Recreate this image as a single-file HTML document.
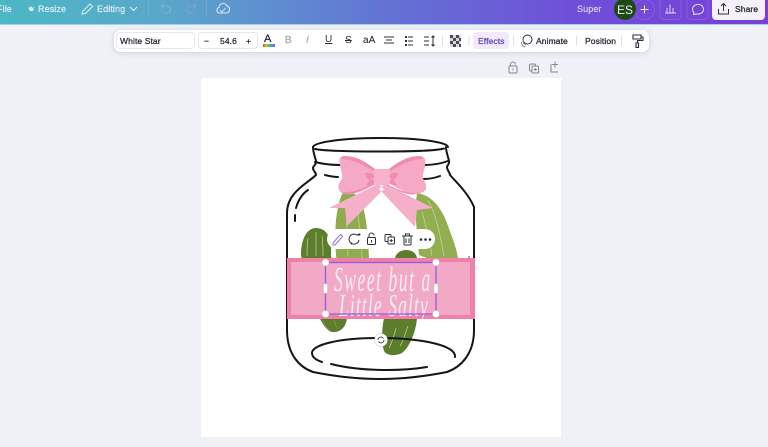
<!DOCTYPE html>
<html><head><meta charset="utf-8">
<style>
html,body{margin:0;padding:0;width:768px;height:447px;overflow:hidden;background:#eff1f7;font-family:"Liberation Sans",sans-serif}
.abs{position:absolute}
#hdr{position:absolute;left:0;top:0;width:768px;height:24px;background:linear-gradient(90deg,#4bb8c4 0%,#5aa6cb 22%,#6373d4 50%,#6f4fd8 75%,#7a3fd6 100%);border-bottom:1px solid #9fd0ea}
.t{position:absolute;color:#dcecf4;font-size:9px;-webkit-text-stroke:.2px #dcecf4;letter-spacing:.1px;white-space:nowrap;line-height:12px}
.d{position:absolute;color:#2c2f3a;font-size:8.5px;-webkit-text-stroke:.3px #2c2f3a;letter-spacing:.1px;white-space:nowrap;line-height:12px}
</style></head><body>
<div id="hdr"></div>
<div class="t" style="left:-3px;top:3px">File</div>
<div class="t" style="left:38px;top:3px">Resize</div>
<div class="t" style="left:97px;top:3px">Editing</div>
<div class="t" style="left:577px;top:3px;color:#d8cff6;-webkit-text-stroke:.2px #d8cff6">Super</div>
<svg class="abs" style="left:0;top:0" width="768" height="25" fill="none" stroke="#dcecf4" stroke-width="1">
<path d="M28 6.500l1.500 1.500 1.500-2 1.500 2 1.500-1.500-.8 4.500h-3.400z" fill="#dcecf4" stroke="none"/>
<path d="M82 14l1-3 7-7 2.500 2.500-7 7z" stroke-width="1.100"/>
<path d="M130 7l3.500 3.500 3.500-3.500" stroke-width="1.100"/>
<path d="M148.500 1v15M206.500 1v15" stroke="#8fb4d8" stroke-width=".7" opacity=".7"/>
<path d="M161 6h6a3.500 3.500 0 010 7h-4M161 6l2.500-2.500M161 6l2.500 2.500" stroke="#84acd2"/>
<path d="M196 6h-6a3.500 3.500 0 000 7h3M196 6l-2.500-2.500M196 6l-2.500 2.500" stroke="#8a9cd4"/>
<path d="M219.500 13a2.800 2.800 0 01-.5-5.500 4.200 4.200 0 018-1.500 3.600 3.600 0 01-.5 7z" stroke-width="1"/>
<path d="M220 10l2 2 3.500-4" stroke-width=".8"/>
<circle cx="644.500" cy="9.500" r="10" stroke="#8a68dc" stroke-width=".7"/>
<path d="M640.500 9.500h8M644.500 5.500v8" stroke="#eee" stroke-width="1"/>
<rect x="660" y="-2" width="21" height="21.500" rx="4" stroke="#8a68dc" stroke-width=".7"/>
<rect x="687" y="-2" width="21" height="21.500" rx="4" stroke="#8a68dc" stroke-width=".7"/>
<path d="M665 13h11M667 13V8M670 13V4.500M673 13V8" stroke="#e6e0f8" stroke-width=".9"/>
<path d="M697.500 14a5.500 4.800 0 10-3.500-1.500l-.5 2z" stroke="#e6e0f8" stroke-width="1"/>
</svg>
<div class="abs" style="left:614px;top:-2px;width:22px;height:22px;border-radius:50%;background:#1c4a11;color:#eef;font-size:12px;text-align:center;line-height:24px">ES</div>
<div class="abs" style="left:712px;top:-4px;width:53px;height:24px;border-radius:4px;background:#f4f1fb"></div>
<svg class="abs" style="left:717px;top:2px" width="14" height="14" fill="none" stroke="#30303a" stroke-width="1"><path d="M1.500 7v5h10V7M6.500 9V1.500M4 4l2.500-2.500L9 4"/></svg>
<div class="d" style="left:735px;top:3px">Share</div>

<div class="abs" style="left:114px;top:30px;width:535px;height:22px;background:#fff;border-radius:7px;box-shadow:0 1px 6px rgba(60,60,90,.18)"></div>
<div class="abs" style="left:116px;top:32px;width:79px;height:17px;border:1px solid #e6e7ec;border-radius:4px;box-sizing:border-box"></div>
<div class="abs" style="left:198px;top:32px;width:60px;height:17px;border:1px solid #e6e7ec;border-radius:4px;box-sizing:border-box"></div>
<div class="d" style="left:120px;top:35px">White Star</div>
<div class="d" style="left:204px;top:35px">−</div>
<div class="d" style="left:220px;top:35px">54.6</div>
<div class="d" style="left:246px;top:35px">+</div>
<div class="d" style="left:264px;top:33px;font-size:11px">A</div>
<div class="abs" style="left:263px;top:44px;width:12px;height:3px;background:linear-gradient(90deg,#e83a3a,#f0b429,#4fc94f,#3aa0e8,#a04fe8)"></div>
<div class="d" style="left:285px;top:35px;font-size:10px;color:#b0b2b8;-webkit-text-stroke:.5px #b0b2b8">B</div>
<div class="d" style="left:306px;top:35px;font-size:10px;color:#b0b2b8;-webkit-text-stroke:.3px #b0b2b8;font-style:italic">I</div>
<div class="d" style="left:325px;top:34px;font-size:10px;-webkit-text-stroke:0;text-decoration:underline">U</div>
<div class="d" style="left:345px;top:35px;font-size:10px;-webkit-text-stroke:0;text-decoration:line-through">S</div>
<div class="d" style="left:363px;top:35px;font-size:10px;-webkit-text-stroke:.1px #2c2f3a">aA</div>
<svg class="abs" style="left:380px;top:32px" width="270" height="18" fill="none" stroke="#2c2f3a" stroke-width="1">
<path d="M4 5h10M6 8h6M4 11h10"/>
<path d="M28 5h5M28 9h5M28 13h5"/>
<path d="M25 4h2v2h-2zM25 8h2v2h-2zM25 12h2v2h-2z" fill="#2c2f3a" stroke="none"/>
<path d="M44 5h5M44 9h5M44 13h5M53 4v10M51.500 5.500L53 4l1.500 1.500M51.500 12.500L53 14l1.500-1.500"/>
<path d="M62.500 4v10M89 4v10M133.500 4v10M196.500 4v10M241.500 4v10" stroke="#d8d9e0" stroke-width=".8"/>
<path d="M70 3h3v3h-3zM76 3h3v3h-3zM73 6h3v3h-3zM79 6h2v3h-2zM70 9h3v3h-3zM76 9h3v3h-3zM73 12h3v3h-3zM79 12h2v3h-2z" fill="#4a4a52" stroke="none"/>
<path d="M73 3h3v3h-3zM79 3h2v3h-2zM70 6h3v3h-3zM76 6h3v3h-3zM73 9h3v3h-3zM79 9h2v3h-2zM70 12h3v3h-3zM76 12h3v3h-3z" fill="#d8d9de" stroke="none"/>
<circle cx="147.500" cy="7.500" r="4.500"/><path d="M143 8a5 5 0 003 5M141.500 10a4.500 4.500 0 003.500 5" stroke="#888"/>
<path d="M253 3h8v4h-8zM261 5h2v3.500h-5.500v2M256 11h2.500v4.500H256z" stroke-width="1.100"/>
</svg>
<div class="abs" style="left:473px;top:32px;width:36px;height:17px;background:#f0eafc;border-radius:4px"></div>
<div class="d" style="left:478px;top:35px;color:#6d4fb8;-webkit-text-stroke:.3px #6d4fb8">Effects</div>
<div class="d" style="left:536px;top:35px">Animate</div>
<div class="d" style="left:585px;top:35px">Position</div>

<svg class="abs" style="left:505px;top:60px" width="55" height="16" fill="none" stroke="#868892" stroke-width="1">
<rect x="4" y="6" width="8" height="7" rx="1"/><path d="M5.500 6V4.500a2.500 2.500 0 015 0M8 8.500v2"/>
<rect x="24.500" y="4" width="6" height="7" rx="1"/><rect x="27" y="6" width="6.500" height="7" rx="1" fill="#eff1f7"/><path d="M30.200 8v3M28.800 9.500h3"/>
<path d="M46 4v8h7M50 1.500v6M47 4.500h6"/>
</svg>

<div class="abs" style="left:201px;top:78px;width:360px;height:359px;background:#fff"></div>

<svg class="abs" style="left:0;top:0" width="768" height="447" viewBox="0 0 768 447">
<!-- pickles -->
<path d="M342 194c4-4 12-2 18 4 6 14 8 34 9 60l2 12-4 16-20 10-10-30c-2-20-4-50 5-72z" fill="#8fab4e"/>
<path d="M417 193c14 2 24 14 30 30 5 14 10 26 11 36l-24 2-15-6-4-45z" fill="#93ae50"/>
<path d="M301 255c0-16 6-27 15-27 12 0 16 12 15 28l16 60c0 12-8 17-15 16-10-2-22-30-31-77z" fill="#5c7d2b"/>
<path d="M395 258c1-5 6-8 11-8 6 0 10 3 11 8z" fill="#5c7d2b"/>
<path d="M384 318h33c-1 14-8 30-15 35-8 4-16 2-18-2-2-6-3-18 0-33z" fill="#5c7d2b"/>
<path d="M346 212c1 14 1 28 2 44M358 212c1 12 3 30 4 46M428 200c8 14 12 34 16 56M422 212c4 14 8 30 10 44M316 232v24M308 238c-1 6-1 12-1 18M322 236c1 6 1 14 1 20M396 328c-2 8-4 14-7 20M408 326c-3 8-4 14-8 20" stroke="#c6d69a" stroke-width=".7" fill="none"/>
<path d="M322 320c2 4 4 8 8 10M334 320c1 3 2 7 4 9" stroke="#88a050" stroke-width=".6" fill="none"/>
<!-- jar -->
<g fill="none" stroke="#15151a" stroke-width="2" stroke-linecap="round">
<path d="M313 147c2-5 30-9 68-9s66 4 67 9"/>
<path d="M315 149c10 2 36 2.500 66 2.500s54-.5 63-3"/>
<path d="M313 147c0 5 2 10 3 14 1 3-3 5-3 7 0 3 3 4 3 7-8 8-29 17-29 38v117c0 24 12 37 26 42 20 4 42 7 67 7s47-3 67-7c14-5 27-18 27-42V207c-6-14-17-24-24-32 0-2-3-5-3-8 0-2 3-3 2-6-1-5-3-9-3-14"/>
<path d="M315 162c8 2 16 3 25 3M424 165c8 0 16-1 24-4M325 175c4 1 8 2 13 2M423 179c6 0 12-1 17-3"/>
<path d="M308 190c-6 4-10 11-12 18M295 215v6"/>
<path d="M322 362c-6-2-10-5-10-9 0-8 26-15 66-15M386 338c40 1 70 8 69 19"/>
<path d="M331 364c16 4 36 6 56 6 14 0 28-1 40-3"/>
</g>
<!-- bow -->
<path d="M378 184L329 208l16 0 2 18 37-37zM385 184l48 24-16 2-2 17-36-38z" fill="#f6afc8"/>
<path d="M375 169c-6-3-20-14-32-13-4 1-4 4-3 9 1 7 3 10 2 14-2 3-5 6-3 11 2 5 10 5 17 3 8-2 15-7 19-9h15c5 2 11 7 19 9 7 2 14 1 17-4 1-5-2-8-3-11-1-4 2-8 2-13 1-5 0-8-4-9-12-1-25 10-31 13z" fill="#f5a9c5"/>
<path d="M342 157c12-3 24 5 33 12l-2 2c-9-6-18-11-31-12zM422 157c-12-3-24 5-33 12l2 2c9-6 18-11 31-12z" fill="#ef8cb0"/>
<path d="M342 192c12 1 24-5 33-9v1.500c-10 4-18 10-30 9.500zM418 193c-12 1-24-5-33-10v1.500c10 4 18 10 28 10z" fill="#ef8cb0"/>
<path d="M365 173c3-1 7 0 9 2v3l-5 1 5 1v3c-3 2-6 3-8 2 1-2 3-3 3-5-2-2-4-4-4-7zM398 173c-3-1-7 0-9 2v3l5 1-5 1v3c3 2 6 3 8 2-1-2-3-3-3-5 2-2 4-4 4-7z" fill="#ef8cb0"/>
<rect x="374" y="169" width="16" height="16" rx="2" fill="#f7b2cb"/>
<!-- band -->
<rect x="287" y="258" width="188" height="61" fill="#f080a8"/>
<rect x="291" y="262" width="179" height="53" fill="#f2a9c5"/>
<circle cx="469" cy="257" r=".8" fill="#333"/>
<!-- script text -->
<g fill="#fff" font-family="'Liberation Serif',serif" font-style="italic" opacity=".8">
<text transform="translate(334,291) scale(1.25,2.5)" font-size="14" textLength="77" lengthAdjust="spacing">Sweet but a</text>
<text transform="translate(339,316) scale(1.25,2.3)" font-size="14" textLength="71" lengthAdjust="spacing">Little Salty</text>
</g>
<!-- selection -->
<rect x="325.500" y="262.500" width="110.500" height="51.500" fill="none" stroke="#9358e8" stroke-width="1.300"/>
<g fill="#fff" stroke="#c0c0c8" stroke-width=".5">
<circle cx="325.500" cy="262.500" r="3.500"/><circle cx="436" cy="262.500" r="3.500"/><circle cx="325.500" cy="314" r="3.500"/><circle cx="436" cy="314" r="3.500"/>
<rect x="323.500" y="283.500" width="4" height="10" rx="2"/><rect x="434" y="283.500" width="4" height="10" rx="2"/>
<circle cx="381" cy="340" r="6.500"/>
</g>
<path d="M378 340a3 3 0 014.500-2.500l1 1M384 340a3 3 0 01-4.500 2.500l-1-1" fill="none" stroke="#444" stroke-width=".9"/>
<!-- floating bar -->
<rect x="327" y="229" width="108" height="20" rx="10" fill="#fff"/>
<g fill="none" stroke="#2c2f3a" stroke-width="1">
<path d="M333 243l7-8c1-1 3 1 2 2l-7 8h-2z" stroke="#8a72e0"/>
<path d="M357.500 235.500a5 5 0 10 1.500 4.500M351 244.500l1-2M359 233v3M357.500 234.500h3"/>
<rect x="367.500" y="237.500" width="8" height="7" rx="1"/><path d="M369 237.500v-2a2.500 2.500 0 015 0M371.500 240v2.500"/>
<rect x="385" y="234.500" width="6" height="7" rx="1"/><rect x="388" y="237" width="6.500" height="7" rx="1" fill="#fff"/><path d="M391.200 239v3M389.800 240.500h3"/>
<path d="M402 236h11M404 236v8a1 1 0 001 1h5a1 1 0 001-1v-8M405.500 236v-2h4v2M406 238.500v4.500M409 238.500v4.500"/>
</g>
<circle cx="421" cy="239.500" r="1.300" fill="#2c2f3a"/><circle cx="425.500" cy="239.500" r="1.300" fill="#2c2f3a"/><circle cx="430" cy="239.500" r="1.300" fill="#2c2f3a"/>
</svg>
</body></html>
